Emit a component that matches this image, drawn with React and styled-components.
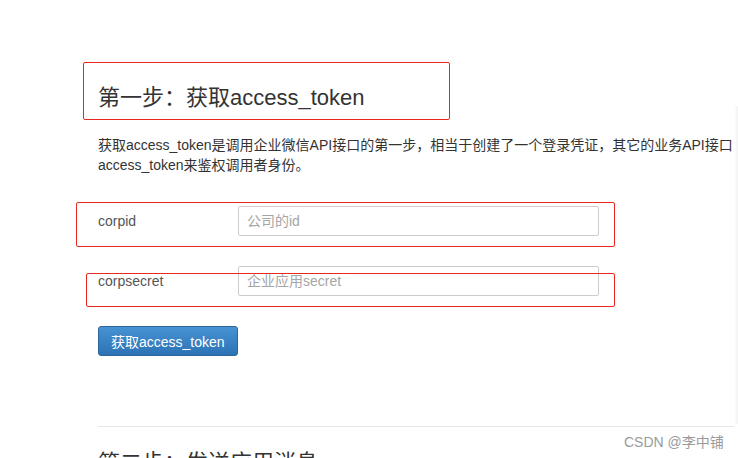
import React from 'react'
import styled, { createGlobalStyle } from 'styled-components'

const GlobalStyle = createGlobalStyle`
  html, body {
    margin: 0;
    padding: 0;
    background: #fff;
    overflow: hidden;
  }
  body {
    font-family: "Liberation Sans", "Noto Sans CJK SC", sans-serif;
    color: #333;
  }
`

const Page = styled.div`
  position: relative;
  display: flex;
  width: 738px;
  height: 458px;
  overflow: hidden;
`

const Main = styled.main`
  flex: 1;
  min-width: 0;
  padding-left: 98px;
`

const Aside = styled.aside`
  width: 4px;
  margin-top: 106px;
  height: 318px;
  background: linear-gradient(to right, #fff, #f2f2f2);
`

const Heading = styled.h3`
  margin: ${({ $top }) => $top}px 0 0;
  font-size: 22px;
  line-height: 24px;
  font-weight: 400;
  color: #333;
  white-space: nowrap;
`

const Intro = styled.p`
  margin: 25px 0 0;
  width: 760px;
  font-size: 14px;
  line-height: 20px;
  color: #333;
`

const Form = styled.form`
  display: grid;
  grid-template-columns: 140px 361px;
  row-gap: 30px;
  align-items: center;
  margin-top: 31px;
`

const Label = styled.label`
  font-size: 14px;
  color: #555;
`

const Input = styled.input`
  box-sizing: border-box;
  height: 30px;
  width: 100%;
  padding: 0 8px;
  border: 1px solid #ccc;
  border-radius: 2px;
  font: inherit;
  font-size: 14px;
  color: #555;
  outline: none;

  &::placeholder {
    color: #a5a5a5;
  }
`

const Button = styled.button`
  box-sizing: border-box;
  margin-top: 30px;
  height: 30px;
  padding: 0 12px;
  border: 1px solid #2b669a;
  border-radius: 3px;
  background: linear-gradient(to bottom, #4792d2, #2c73b6);
  color: #fff;
  font: inherit;
  font-size: 14px;
  cursor: pointer;
`

const Rule = styled.hr`
  margin: 70px 0 0;
  border: 0;
  border-top: 1px solid #e6e6e6;
`

const Mark = styled.div`
  position: absolute;
  left: ${({ $x }) => $x}px;
  top: ${({ $y }) => $y}px;
  width: ${({ $w }) => $w}px;
  height: ${({ $h }) => $h}px;
  box-sizing: border-box;
  border: 1px solid #e8281f;
  border-radius: 2px;
  pointer-events: none;
`

const Watermark = styled.div`
  position: absolute;
  left: 624px;
  top: 431px;
  font-size: 14px;
  color: #9a9a9a;
  white-space: nowrap;
`

export default function App() {
  return (
    <>
      <GlobalStyle />
      <Page>
        <Main>
          <Heading $top={86}>第一步：获取access_token</Heading>
          <Intro>
            获取access_token是调用企业微信API接口的第一步，相当于创建了一个登录凭证，其它的业务API接口，都需要依赖于access_token来鉴权调用者身份。
          </Intro>
          <Form onSubmit={(e) => e.preventDefault()}>
            <Label htmlFor="corpid">corpid</Label>
            <Input id="corpid" placeholder="公司的id" />
            <Label htmlFor="corpsecret">corpsecret</Label>
            <Input id="corpsecret" placeholder="企业应用secret" />
          </Form>
          <Button type="button">获取access_token</Button>
          <Rule />
          <Heading $top={24}>第二步：发送应用消息</Heading>
        </Main>
        <Aside />
        <Mark $x={83} $y={62} $w={367} $h={58} />
        <Mark $x={76} $y={202} $w={539} $h={45} />
        <Mark $x={86} $y={273} $w={529} $h={34} />
        <Watermark>CSDN @李中铺</Watermark>
      </Page>
    </>
  )
}
